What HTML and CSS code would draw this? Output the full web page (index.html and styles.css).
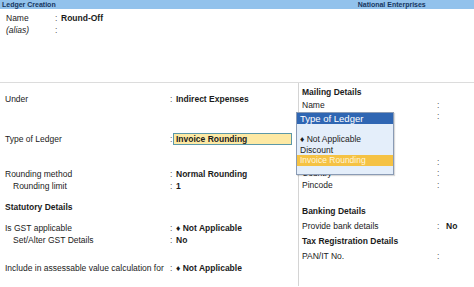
FILE: index.html
```html
<!DOCTYPE html>
<html lang="en">
<head>
    <meta charset="UTF-8">
    <meta name="viewport" content="width=device-width, initial-scale=1.0">
    <title>Ledger Creation</title>
    <link rel="stylesheet" href="styles.css">
</head>
<body>
    <div class="titlebar">
        <span>Ledger Creation</span>
        <span class="company">National Enterprises</span>
    </div>

    <div class="top">
        <div class="row">
            <span class="label name-label">Name</span>
            <span class="colon">:</span>
            <span class="value">Round-Off</span>
        </div>
        <div class="row">
            <span class="label name-label"><i>(alias)</i></span>
            <span class="colon">:</span>
        </div>
    </div>

    <div class="main">
        <div class="left">
            <div class="row under">
                <span class="label">Under</span>
                <span class="colon">:</span>
                <span class="value">Indirect Expenses</span>
            </div>
            <div class="row type">
                <span class="label">Type of Ledger</span>
                <span class="colon">:</span>
                <span class="value field">Invoice Rounding</span>
            </div>
            <div class="row method">
                <span class="label">Rounding method</span>
                <span class="colon">:</span>
                <span class="value">Normal Rounding</span>
            </div>
            <div class="row">
                <span class="label sub">Rounding limit</span>
                <span class="colon">:</span>
                <span class="value">1</span>
            </div>
            <div class="row heading statutory">Statutory Details</div>
            <div class="row gst">
                <span class="label">Is GST applicable</span>
                <span class="colon">:</span>
                <span class="value">&#9830; Not Applicable</span>
            </div>
            <div class="row">
                <span class="label sub">Set/Alter GST Details</span>
                <span class="colon">:</span>
                <span class="value">No</span>
            </div>
            <div class="row include">
                <span class="label">Include in assessable value calculation for</span>
                <span class="colon">:</span>
                <span class="value">&#9830; Not Applicable</span>
            </div>
        </div>

        <div class="right">
            <div class="rrow heading mailing">Mailing Details</div>
            <div class="rrow"><span class="rlabel">Name</span><span class="colon">:</span></div>
            <div class="rrow"><span class="rlabel"></span><span class="colon">:</span></div>
            <div class="rrow"></div>
            <div class="rrow"></div>
            <div class="rrow"></div>
            <div class="rrow"><span class="rlabel"></span><span class="colon">:</span></div>
            <div class="rrow"><span class="rlabel">Country</span><span class="colon">:</span></div>
            <div class="rrow"><span class="rlabel">Pincode</span><span class="colon">:</span></div>

            <div class="brow heading banking">Banking Details</div>
            <div class="brow"><span class="rlabel">Provide bank details</span><span class="colon">:</span><span class="value">No</span></div>
            <div class="brow heading">Tax Registration Details</div>
            <div class="brow"><span class="rlabel">PAN/IT No.</span><span class="colon">:</span></div>
        </div>

        <div class="popup">
            <div class="popup-title">Type of Ledger</div>
            <div class="popup-list">
                <div class="item">&#9830; Not Applicable</div>
                <div class="item">Discount</div>
                <div class="item selected">Invoice Rounding</div>
            </div>
        </div>
    </div>
</body>
</html>
```

FILE: styles.css
```css
body {
    font-family: "Liberation Sans", Arial, sans-serif;
    font-size: 8.5px;
    color: #1b1b1b;
    margin: 0;
    background-color: #ffffff;
    width: 474px;
    height: 287px;
    overflow: hidden;
}

.titlebar {
    display: flex;
    height: 9px;
    line-height: 9px;
    padding: 0 2px;
    background-color: #92c2ec;
    color: #163660;
    font-size: 7px;
    font-weight: bold;
}

.titlebar .company {
    margin-left: 302px;
}

/* Top section */
.top {
    height: 74px;
    padding-top: 3px;
    box-sizing: border-box;
    border-bottom: 1px solid #dcdcdc;
}

.row {
    display: flex;
    height: 12px;
    line-height: 12px;
    white-space: nowrap;
}

.label {
    width: 165px;
    padding-left: 5px;
}

.label.sub {
    padding-left: 13px;
    width: 157px;
}

.name-label {
    width: 49px;
    padding-left: 6px;
}

.colon {
    width: 5px;
    color: #555;
}

.value {
    font-weight: bold;
    padding-left: 1px;
}

/* Main section */
.main {
    display: flex;
    position: relative;
    height: 203px;
}

.left {
    width: 298px;
    border-right: 1px solid #d4d4d4;
}

.under {
    margin-top: 10px;
}

.type {
    margin-top: 28px;
}

.field {
    width: 115px;
    height: 10px;
    line-height: 10px;
    margin-left: -2px;
    padding-left: 2px;
    background-color: #fde9a4;
    border: 1px solid #5c98a8;
}

.method {
    margin-top: 23px;
}

.heading {
    font-weight: bold;
    padding-left: 5px;
}

.statutory {
    margin-top: 9px;
}

.gst {
    margin-top: 9px;
}

.include {
    margin-top: 16px;
}

.right {
    flex: 1;
    padding-left: 3px;
}

.right .heading {
    padding-left: 0;
}

.rrow {
    display: flex;
    height: 11.4px;
    line-height: 11.4px;
}

.mailing {
    margin-top: 4px;
    height: 13px;
}

.rlabel {
    width: 135px;
}

.brow {
    display: flex;
    height: 15px;
    line-height: 15px;
}

.banking {
    margin-top: 13px;
}

.brow .value {
    padding-left: 4px;
}

/* Popup list */
.popup {
    position: absolute;
    left: 296px;
    top: 29px;
    width: 96px;
    height: 61px;
    background-color: #e4eefa;
    border: 1px solid #8a9bb5;
    box-shadow: 1px 1px 1px rgba(0, 0, 0, 0.15);
}

.popup-title {
    height: 11px;
    line-height: 11px;
    padding-left: 3px;
    background-color: #2f66b3;
    color: #ffffff;
    font-size: 9.5px;
}

.popup-list {
    padding-top: 10px;
}

.item {
    height: 10.5px;
    line-height: 10.5px;
    padding-left: 3px;
    font-size: 8.5px;
}

.item.selected {
    background-color: #f5c244;
    color: #fff6dc;
}
```
